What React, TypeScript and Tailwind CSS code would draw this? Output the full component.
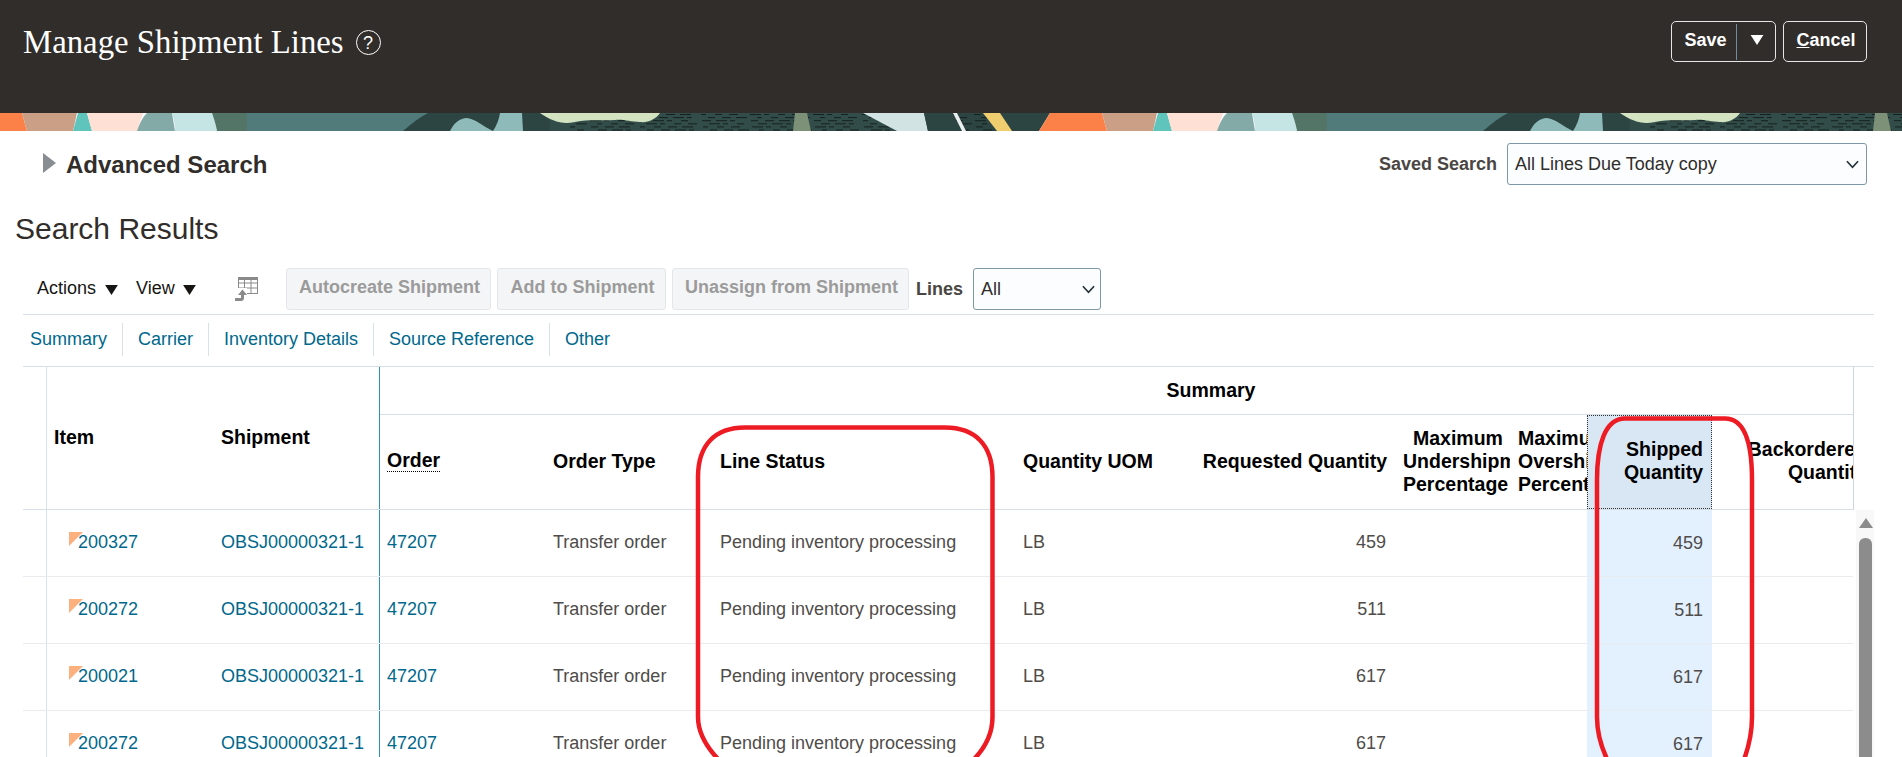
import React from "react";

const rows = [
  { item: "200327", req: "459" },
  { item: "200272", req: "511" },
  { item: "200021", req: "617" },
  { item: "200272", req: "617" },
];

const dashes: [number, number, number][] = [];
for (let r = 0; r < 6; r++) {
  for (let i = 0; i < 26; i++) {
    const x = 568 + i * 16 + ((r * 7) % 13) + ((i * 5) % 7);
    const y = 1 + r * 3.1;
    const len = 5 + ((i + r) % 4) * 2;
    dashes.push([x, y, len]);
  }
}

function BannerPeriod({ x }: { x: number }) {
  return (
    <g transform={`translate(${x} 0)`}>
      <polygon points="-30,0 22,0 27,18 -41,18" fill="#fb8149" />
      <polygon points="22,0 77,0 73,18 27,18" fill="#cb9f86" />
      <polygon points="78,0 87,0 92,18 73,18" fill="#5fc4bc" />
      <polygon points="87,0 143,0 137,18 92,18" fill="#fee0d4" />
      <path d="M137 18 C140 9 143 4 147 0 L172 0 L175 18 Z" fill="#84aaa8" />
      <path d="M172 0 L212 0 C214 6 216 12 217 18 L175 18 C175 12 174 6 172 0 Z" fill="#c5e5e4" />
      <path d="M212 0 L247 0 C250 6 253 12 255 18 L217 18 C216 12 214 6 212 0 Z" fill="#527567" />
      <rect x="247" y="0" width="190" height="18" fill="#507b7a" />
      <path d="M403 18 C412 10 420 4 428 0 L1050 0 L1039 18 Z" fill="#2c4542" />
      <path d="M450 18 C454 10 460 5 467 5 C476 6 484 14 493 18 Z" fill="#8fbaba" />
      <path d="M493 18 C497 12 499 6 500 0 L522 0 L523 18 Z" fill="#8fbaba" />
      <rect x="550" y="0" width="350" height="18" fill="#324d49" />
      {dashes.map(([dx, dy, len], i) => (
        <rect key={i} x={dx} y={dy} width={len} height="1" fill="#16211f" />
      ))}
      <path d="M540 0 L660 0 C656 6 648 10 640 9 C630 9 624 6 615 7 C600 8 590 6 575 9 C562 12 552 8 540 0 Z" fill="#d3e2c0" />
      <polygon points="795,0 807,0 811,18 793,18" fill="#7d9078" />
      <polygon points="863,0 924,0 928,18 897,18" fill="#d2e3e4" />
      <polygon points="924,0 950,0 964,18 928,18" fill="#2c4542" />
      <polygon points="953,0 957,0 966,18 962,18" fill="#e8efee" />
      <polygon points="983,0 1000,0 1012,18 997,18" fill="#f0cd6e" />
    </g>
  );
}

function Caret({ className }: { className: string }) {
  return (
    <svg viewBox="0 0 14 11" className={className}>
      <polygon points="0,0 14,0 7,11" fill="currentColor" />
    </svg>
  );
}

function Chevron() {
  return (
    <svg viewBox="0 0 14 9" className="w-[13px] h-[9px]">
      <path d="M1 1 L7 7.5 L13 1" fill="none" stroke="#26333a" strokeWidth="1.8" />
    </svg>
  );
}

function Tab({ label, width, last }: { label: string; width: string; last?: boolean }) {
  return (
    <div className={`${width} h-[33px] flex items-center ${last ? "" : "border-r border-[#d8e1e7]"}`}>
      <span className="text-[18px] text-[#00688c]">{label}</span>
    </div>
  );
}

function DisabledButton({ label, width }: { label: string; width: string }) {
  return (
    <div className={`${width} h-[42px] pb-[3px] pl-[2px] flex items-center justify-center bg-[#f4f5f6] border border-[#e3e7ea] rounded-[3px] text-[18px] font-bold text-[#9b9b9b]`}>
      {label}
    </div>
  );
}

function App() {
  return (
    <div className="relative w-[1902px] h-[757px] overflow-hidden bg-white font-['Liberation_Sans',sans-serif] text-[#312d2a]">
      <header className="h-[113px] bg-[#312d2a] flex justify-between pl-[23px] pr-[35px] pt-[21px]">
        <div className="flex items-start gap-[12px] pt-[1px]">
          <h1 className="font-['Liberation_Serif',serif] text-[32.8px] leading-[40px] text-white">Manage Shipment Lines</h1>
          <div className="mt-[8px] w-[25px] h-[25px] rounded-full border-[1.5px] border-white flex items-center justify-center text-[18px] leading-none text-white">?</div>
        </div>
        <div className="flex gap-[7px] h-[41px]">
          <div className="w-[105px] h-full flex items-center border border-[#e6e6e6] rounded-[5px] text-white">
            <span className="w-[64px] text-center text-[18px] font-bold pl-[3px] pb-[2px]">Save</span>
            <span className="h-[36px] border-l border-[#6f8ea5]" />
            <Caret className="w-[14px] h-[10px] ml-[13px] -mt-[3px] text-white" />
          </div>
          <div className="w-[84px] h-full pb-[2px] pl-[2px] flex items-center justify-center border border-[#e6e6e6] rounded-[5px] text-[18px] font-bold text-white">
            <span><span className="underline">C</span>ancel</span>
          </div>
        </div>
      </header>

      <svg className="block w-[1902px] h-[18px]" viewBox="0 0 1902 18">
        <BannerPeriod x={0} />
        <BannerPeriod x={1080} />
      </svg>

      <section className="h-[55px] flex justify-between items-start pt-[12px] pl-[43px] pr-[35px]">
        <div className="flex items-center gap-[10px] h-[44px]">
          <svg viewBox="0 0 13 20" className="w-[13px] h-[20px] -mt-[4px]">
            <polygon points="0,0 13,10 0,20" fill="#888d92" />
          </svg>
          <h2 className="text-[24px] font-bold text-[#312d2a]">Advanced Search</h2>
        </div>
        <div className="flex items-center gap-[10px]">
          <span className="text-[18px] font-bold text-[#4a4643]">Saved Search</span>
          <div className="w-[360px] h-[42px] flex items-center justify-between pl-[7px] pr-[7px] bg-[#fbfdff] border border-[#7d98a8] rounded-[3px]">
            <span className="text-[18px] text-[#312d2a]">All Lines Due Today copy</span>
            <Chevron />
          </div>
        </div>
      </section>

      <h2 className="h-[82px] pl-[15px] pt-[25px] text-[30px] leading-[36px] text-[#312d2a]">Search Results</h2>

      <div className="ml-[23px] w-[1851px]">
        <div className="h-[47px] flex items-start border-b border-[#d6dfe7]">
          <div className="flex items-center h-[42px] pb-[2px] pl-[14px] w-[263px]">
            <span className="w-[59px] text-[18px] text-[#161513]">Actions</span>
            <Caret className="w-[13px] h-[10px] ml-[9px] mt-[4px] text-[#161513]" />
            <span className="w-[40px] text-[18px] text-[#161513] ml-[18px]">View</span>
            <Caret className="w-[13px] h-[10px] ml-[7px] mt-[4px] text-[#161513]" />
            <svg viewBox="0 0 24 25" className="w-[24px] h-[25px] ml-[39px] mt-[3px]">
              <g fill="none" stroke="#8a8a8a" strokeWidth="1">
                <rect x="3.5" y="0.5" width="19" height="16" />
                <path d="M9.5 0.5 V16.5 M16 0.5 V16.5 M3.5 6 H22.5 M3.5 11 H22.5" />
              </g>
              <rect x="3" y="0" width="20" height="3" fill="#8a8a8a" />
              <rect x="0" y="11" width="12" height="14" fill="#ffffff" />
              <path d="M0 22.5 H6 Q7.5 22.5 7.5 21 V16" fill="none" stroke="#8a8a8a" strokeWidth="3" />
              <polygon points="3,18 7.5,12.5 12,18" fill="#8a8a8a" />
            </svg>
          </div>
          <div className="flex gap-[6px]">
            <DisabledButton label="Autocreate Shipment" width="w-[205px]" />
            <DisabledButton label="Add to Shipment" width="w-[169px]" />
            <DisabledButton label="Unassign from Shipment" width="w-[237px]" />
          </div>
          <span className="h-[42px] flex items-center ml-[7px] w-[57px] text-[18px] font-bold text-[#4a4643]">Lines</span>
          <div className="w-[128px] h-[42px] flex items-center justify-between pl-[7px] pr-[5px] bg-[#fbfdff] border border-[#7d98a8] rounded-[3px]">
            <span className="text-[18px] text-[#312d2a]">All</span>
            <Chevron />
          </div>
        </div>

        <div className="h-[52px] pb-[2px] flex items-center border-b border-[#d6dfe7]">
          <div className="flex items-center">
            <Tab label="Summary" width="w-[100px] pl-[7px]" />
            <Tab label="Carrier" width="w-[86px] pl-[15px]" />
            <Tab label="Inventory Details" width="w-[165px] pl-[15px]" />
            <Tab label="Source Reference" width="w-[176px] pl-[15px]" />
            <Tab label="Other" width="w-[80px] pl-[15px]" last />
          </div>
        </div>

        {/* table head */}
        <div className="flex w-[1831px] h-[143px] border-b border-[#d6dfe7] border-r-[#ccd5dc] border-r">
          <div className="w-[23px] shrink-0" />
          <div className="w-[167px] shrink-0 border-l border-[#d6e3ea] flex items-center pl-[7px] text-[19.5px] font-bold text-black">Item</div>
          <div className="w-[166px] shrink-0 flex items-center pl-[8px] text-[19.5px] font-bold text-black">Shipment</div>
          <div className="flex-1 min-w-0 flex flex-col border-l border-[#2a93b5]">
            <div className="h-[48px] shrink-0 flex items-center justify-center pl-[189px] border-b border-[#d6dfe7] text-[19.5px] font-bold text-black">Summary</div>
            <div className="flex-1 flex text-[19.5px] leading-[23px] font-bold text-black">
              <div className="w-[165px] flex items-center pb-[2px] pl-[7px]"><span className="border-b border-dotted border-black leading-[21px]">Order</span></div>
              <div className="w-[169px] flex items-center pb-[2px] pl-[8px]">Order Type</div>
              <div className="w-[301px] flex items-center pb-[2px] pl-[6px]">Line Status</div>
              <div className="w-[175px] flex items-center pb-[2px] pl-[8px] whitespace-nowrap">Quantity UOM</div>
              <div className="w-[204px] flex items-center pb-[2px] justify-end pr-[7px] whitespace-nowrap">Requested Quantity</div>
              <div className="w-[116px] flex items-center pb-[2px] overflow-hidden">
                <div className="pl-[9px] whitespace-nowrap">
                  <div className="pl-[10px]">Maximum</div>
                  <div>Undershipment</div>
                  <div>Percentage</div>
                </div>
              </div>
              <div className="w-[77px] flex items-center pb-[2px] overflow-hidden">
                <div className="pl-[8px] whitespace-nowrap text-left">Maximum<br />Overshipment<br />Percentage</div>
              </div>
              <div className="w-[125px] flex items-center pb-[2px] justify-end pr-[8px] text-right bg-[#d9e7f5] border border-dotted border-[#333]">
                <div>Shipped<br />Quantity</div>
              </div>
              <div className="w-[141px] flex items-center pb-[2px] justify-end overflow-hidden">
                <div className="shrink-0 -mr-[14px] text-right whitespace-nowrap">Backordered<br />Quantity</div>
              </div>
            </div>
          </div>
        </div>

        {/* table body */}
        <div className="flex">
          <div className="w-[1830px]">
            {rows.map((r, i) => (
              <div key={i} className="flex h-[67px] border-b border-[#e8ecef] pb-[2px] text-[18px] text-[#4f4c4a]">
                <div className="w-[23px] shrink-0 -mb-[2px]" />
                <div className="w-[167px] shrink-0 -mb-[2px] pb-[2px] border-l border-[#d6e3ea] flex items-center pl-[22px]">
                  <span className="relative pl-[9px] text-[#00688c]">
                    <svg viewBox="0 0 14 14" className="absolute left-0 top-[3px] w-[14px] h-[14px]">
                      <polygon points="0,0 14,0 0,14" fill="#fbb07e" />
                    </svg>
                    <span className="relative">{r.item}</span>
                  </span>
                </div>
                <div className="w-[166px] shrink-0 flex items-center pl-[8px] text-[#00688c]">OBSJ00000321-1</div>
                <div className="w-[166px] shrink-0 -mb-[2px] pb-[2px] border-l border-[#2a93b5] flex items-center pl-[7px] text-[#00688c]">47207</div>
                <div className="w-[169px] shrink-0 flex items-center pl-[8px]">Transfer order</div>
                <div className="w-[301px] shrink-0 flex items-center pl-[6px] whitespace-nowrap">Pending inventory processing</div>
                <div className="w-[175px] shrink-0 flex items-center pl-[8px]">LB</div>
                <div className="w-[204px] shrink-0 flex items-center justify-end pr-[8px]">{r.req}</div>
                <div className="w-[193px] shrink-0" />
                <div className="w-[125px] shrink-0 -mb-[2px] flex items-center justify-end pr-[9px] bg-[#e3f0fd]">{r.req}</div>
              </div>
            ))}
          </div>
          <div className="w-[18px] ml-[3px] h-[248px] shrink-0 bg-[#f8f8f8] flex flex-col items-center">
            <svg viewBox="0 0 14 10" className="w-[14px] h-[10px] mt-[8px] ml-[2px]">
              <polygon points="7,0 14,10 0,10" fill="#8c8c8c" />
            </svg>
            <div className="w-[13px] flex-1 mt-[10px] bg-[#8c8c8c] rounded-t-[6px]" />
          </div>
        </div>
      </div>

      {/* hand-drawn red annotations over the page */}
      <svg className="absolute left-0 top-0 pointer-events-none" width="1902" height="757" viewBox="0 0 1902 757">
        <g fill="none" stroke="#ed1c24" strokeWidth="4.5">
          <path d="M698 477 C698 445 715 427.5 745 427.5 L945 427.5 C975 427.5 992.5 445 992.5 477 L992.5 717 C992.5 735 985 750 968 765" />
          <path d="M698 477 L698 717 C698 735 708 750 724 765" />
          <path d="M1597 480 C1597 445 1605 418.5 1625 418.5 L1725 418.5 C1745 418.5 1752 445 1752 480 L1752 717 C1752 735 1748 750 1742 765" />
          <path d="M1597 480 L1597 717 C1597 735 1602 750 1610 765" />
        </g>
      </svg>
    </div>
  );
}

export default App;
